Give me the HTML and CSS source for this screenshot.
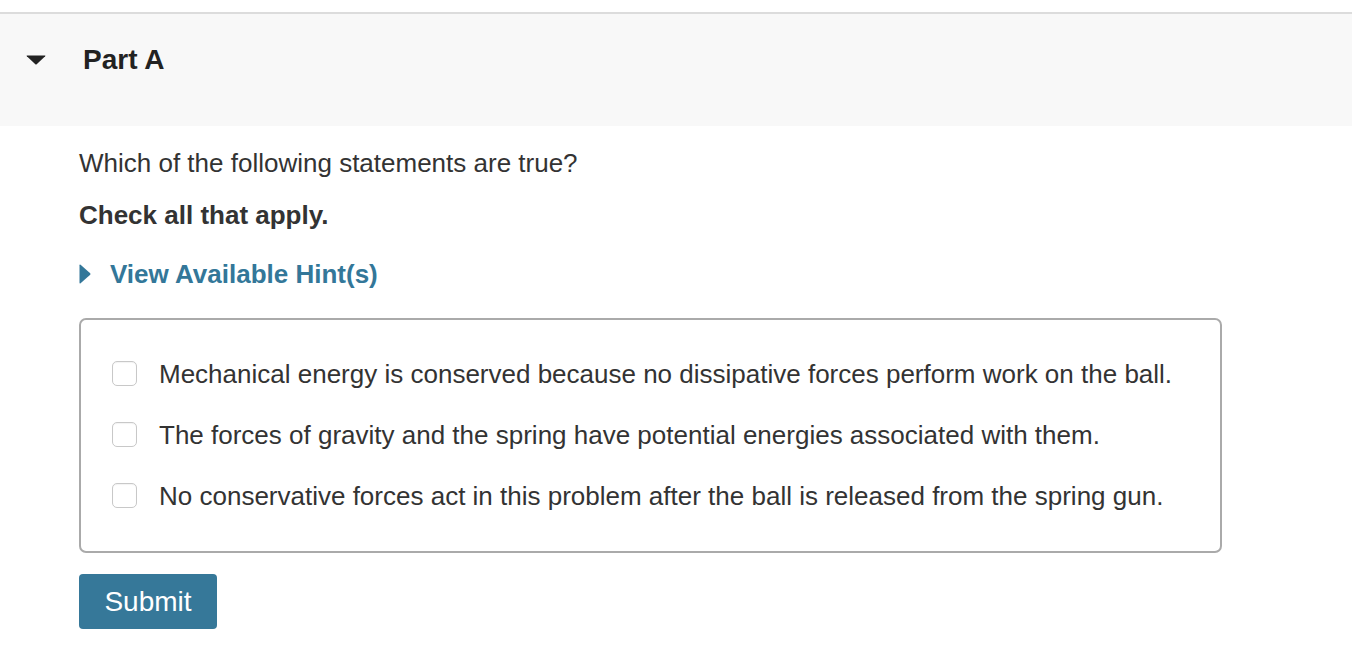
FILE: index.html
```html
<!DOCTYPE html>
<html lang="en">
<head>
    <meta charset="UTF-8">
    <title>Part A</title>
    <link rel="stylesheet" href="styles.css">
</head>
<body>
    <div class="part">
        <div class="part-header">
            <svg class="caret-down" width="20" height="10" viewBox="0 0 20 10">
                <path d="M1 0.5 H19 Q19.8 0.5 19.2 1.3 L10.7 9.3 Q10 9.9 9.3 9.3 L0.8 1.3 Q0.2 0.5 1 0.5 Z" fill="#222"/>
            </svg>
            <h2 class="part-title">Part A</h2>
        </div>

        <div class="part-body">
            <p class="question">Which of the following statements are true?</p>
            <p class="instruction">Check all that apply.</p>

            <a class="hint-toggle" href="#">
                <svg class="caret-right" width="12" height="20" viewBox="0 0 12 20">
                    <path d="M0.5 1.3 Q0.5 0 1.6 0.8 L11.2 9.2 Q11.8 10 11.2 10.8 L1.6 19.2 Q0.5 20 0.5 18.7 Z" fill="#337799"/>
                </svg>
                <span>View Available Hint(s)</span>
            </a>

            <div class="choices">
                <label class="choice">
                    <input type="checkbox" class="choice-box">
                    <span class="choice-text">Mechanical energy is conserved because no dissipative forces perform work on the ball.</span>
                </label>
                <label class="choice">
                    <input type="checkbox" class="choice-box">
                    <span class="choice-text">The forces of gravity and the spring have potential energies associated with them.</span>
                </label>
                <label class="choice">
                    <input type="checkbox" class="choice-box">
                    <span class="choice-text">No conservative forces act in this problem after the ball is released from the spring gun.</span>
                </label>
            </div>

            <button class="btn-submit">Submit</button>
        </div>
    </div>
</body>
</html>
```

FILE: styles.css
```css
body {
    margin: 0;
    font-family: 'Liberation Sans', Arial, Helvetica, sans-serif;
    color: #333;
    background: #fff;
}

.part {
    padding-top: 12px;
}

.part-header {
    display: flex;
    align-items: flex-start;
    height: 82px;
    padding: 30px 0 0 26px;
    background: #f8f8f8;
    border-top: 2px solid #dcdcdc;
}

.caret-down {
    margin-top: 11px;
    flex-shrink: 0;
}

.part-title {
    margin: 0 0 0 37px;
    font-size: 28px;
    line-height: 32px;
    font-weight: bold;
    color: #222;
}

.part-body {
    padding: 22px 0 0 79px;
}

.question,
.instruction {
    margin: 0;
    font-size: 26px;
    line-height: 30px;
}

.instruction {
    margin-top: 22px;
    font-weight: bold;
}

.hint-toggle {
    display: flex;
    align-items: center;
    gap: 19px;
    margin-top: 29px;
    font-size: 26px;
    line-height: 30px;
    font-weight: bold;
    color: #337799;
    text-decoration: none;
}

.choices {
    width: 1079px;
    margin-top: 29px;
    padding: 39px 30px 40px;
    border: 2px solid #aaa;
    border-radius: 7px;
    display: flex;
    flex-direction: column;
    gap: 31px;
}

.choice {
    display: flex;
    align-items: center;
    gap: 22px;
    font-size: 26px;
    line-height: 30px;
    cursor: pointer;
}

.choice-box {
    appearance: none;
    -webkit-appearance: none;
    width: 25px;
    height: 25px;
    margin: 0 0 0 1px;
    flex-shrink: 0;
    border: 1px solid #c8c8c8;
    border-radius: 5px;
    background: #fff;
    box-shadow: inset 0 1px 1px rgba(0, 0, 0, 0.05);
    position: relative;
    top: -1px;
}

.btn-submit {
    display: block;
    margin-top: 21px;
    width: 138px;
    height: 55px;
    border: none;
    border-radius: 4px;
    background: #367899;
    color: #fff;
    font-family: inherit;
    font-size: 28px;
    cursor: pointer;
}
```
